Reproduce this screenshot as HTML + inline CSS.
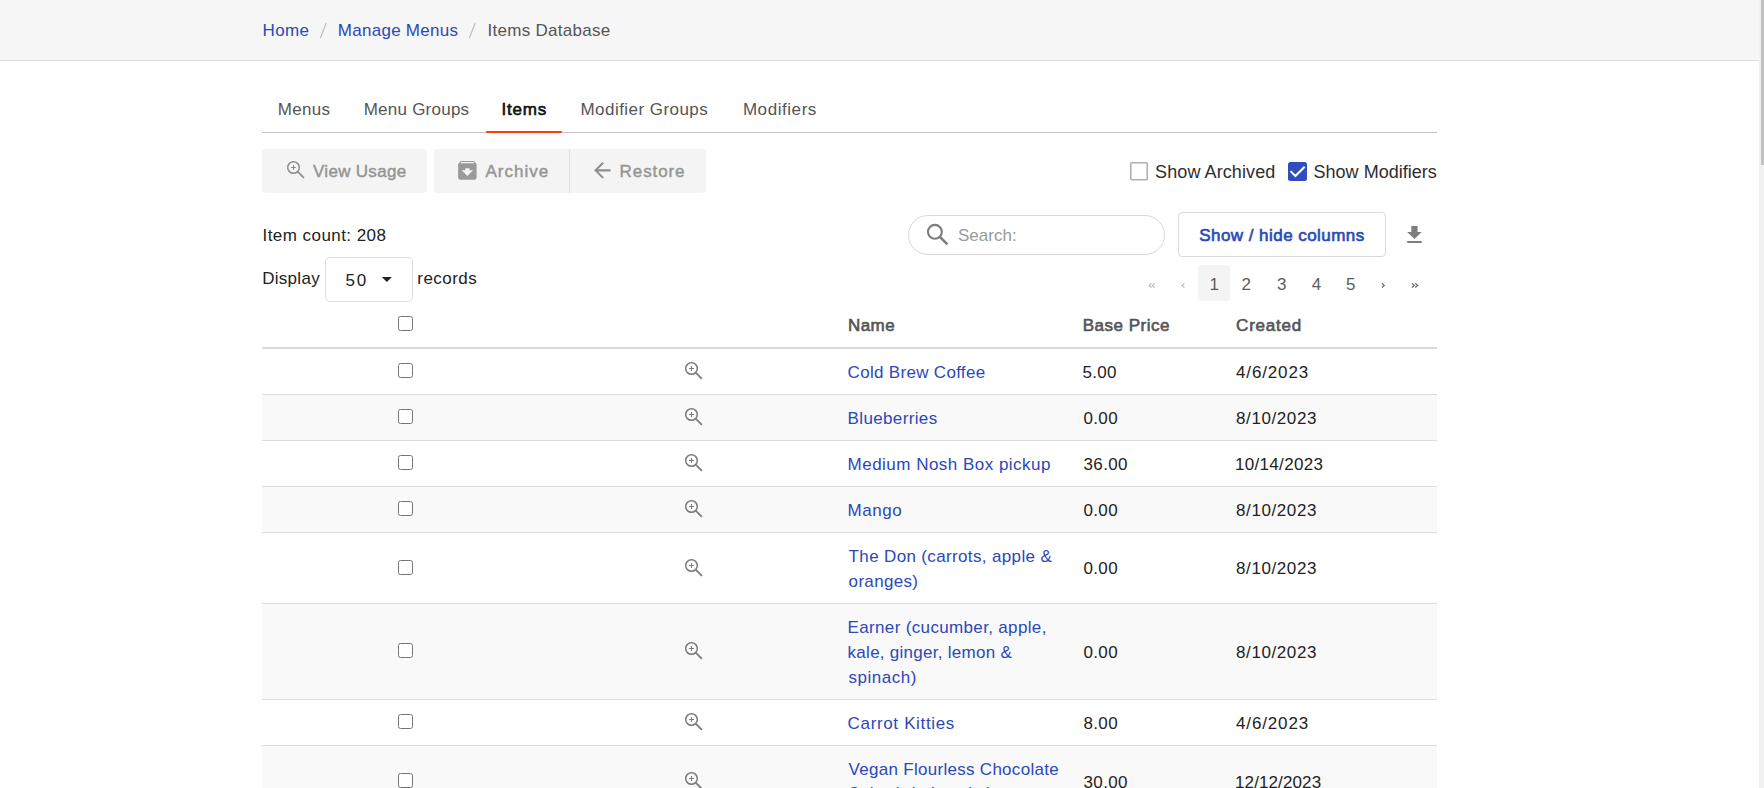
<!DOCTYPE html><html><head><meta charset="utf-8"><title>Items Database</title><style>
html,body{margin:0;padding:0;}
body{width:1764px;height:788px;overflow:hidden;position:relative;background:#fff;font-family:"Liberation Sans",sans-serif;font-size:17px;color:#222;}
.a{position:absolute;white-space:nowrap;line-height:17px;font-size:17px;}
.ab{position:absolute;}
.cb{position:absolute;width:13px;height:13px;border:1px solid #767676;border-radius:2.5px;background:#fff;}
.row{position:absolute;left:262px;width:1175px;}
.bd{position:absolute;left:262px;width:1175px;height:1px;background:#dddddd;}
.st{background:#f9f9f9;}
</style></head><body>
<div class="ab" style="left:0;top:0;width:1759px;height:60px;background:#f6f6f6"></div>
<div class="ab" style="left:0;top:60px;width:1759px;height:1px;background:#dedede"></div>
<div class="ab" style="left:1759px;top:0;width:5px;height:788px;background:#f1f1f1"></div>
<div class="ab" style="left:1761px;top:0;width:3px;height:165px;background:#c1c1c1"></div>
<div class="ab" style="left:262px;top:132px;width:1175px;height:1px;background:#c4c4c4"></div>
<div class="ab" style="left:486px;top:131px;width:76px;height:2px;background:#ff3d00;border-radius:1px"></div>
<div class="ab" style="left:262px;top:149px;width:165px;height:44px;background:#f4f4f4;border-radius:4px"></div>
<div class="ab" style="left:434px;top:149px;width:272px;height:44px;background:#f4f4f4;border-radius:4px"></div>
<div class="ab" style="left:569px;top:149px;width:1px;height:44px;background:#e0e0e0"></div>
<svg class="ab" style="left:283.50px;top:158.10px" width="24" height="24" viewBox="0 0 24 24"><circle cx="9.5" cy="9.5" r="5.8" fill="none" stroke="#8e8e8e" stroke-width="1.5"/><path d="M9.5 7v5M7 9.5h5" stroke="#8e8e8e" stroke-width="1"/><path d="M13.7 13.7L19.9 19.9" stroke="#8e8e8e" stroke-width="1.8"/></svg>
<svg class="ab" style="left:455.00px;top:157.90px" width="24.72" height="24.72" viewBox="0 0 24 24"><path d="M20.54 5.23l-1.39-1.68C18.88 3.21 18.47 3 18 3H6c-.47 0-.88.21-1.16.55L3.46 5.23C3.17 5.57 3 6.02 3 6.5V19c0 1.1.9 2 2 2h14c1.1 0 2-.9 2-2V6.5c0-.48-.17-.93-.46-1.27zM12 17.5L6.5 12H10v-2h4v2h3.5L12 17.5zM5.12 5l.81-1h12l.94 1H5.12z" fill="#9a9a9a"/></svg>
<svg class="ab" style="left:590.20px;top:158.10px" width="24.72" height="24.72" viewBox="0 0 24 24"><path d="M20 11H7.83l5.59-5.59L12 4l-8 8 8 8 1.41-1.41L7.83 13H20v-2z" fill="#8e8e8e"/></svg>
<svg class="ab" style="left:1128px;top:160px" width="22" height="23" viewBox="0 0 22 23"><rect x="2.75" y="2.75" width="16.5" height="17" rx="0.9" fill="#fff" stroke="#b0b0b0" stroke-width="1.6"/></svg>
<svg class="ab" style="left:1288px;top:162px" width="19" height="19" viewBox="0 0 19 19"><rect x="0" y="0" width="19" height="19" rx="2.5" fill="#2f4dbd"/><path d="M2.5 9.1l4.9 4.9 9.3-9.3" fill="none" stroke="#fff" stroke-width="2"/></svg>
<div class="ab" style="left:908px;top:215px;width:255px;height:38px;border:1px solid #d8d8d8;border-radius:20px"></div>
<svg class="ab" style="left:918px;top:216px" width="36" height="36" viewBox="0 0 36 36"><circle cx="16.9" cy="15.85" r="6.95" fill="none" stroke="#7c7c7c" stroke-width="2.1"/><path d="M21.6 20.55L29.4 28.35" stroke="#7c7c7c" stroke-width="2.6"/></svg>
<div class="ab" style="left:1178px;top:212px;width:206px;height:43px;border:1px solid #dadada;border-radius:4px"></div>
<svg class="ab" style="left:1402.0px;top:223.2px" width="24.86" height="24" viewBox="0 0 24 24" preserveAspectRatio="none"><path d="M19 9h-4V3H9v6H5l7 7 7-7zM5 18v2h14v-2H5z" fill="#7e7e7e"/></svg>
<div class="ab" style="left:325px;top:257px;width:86px;height:43px;border:1px solid #dedede;border-radius:5px"></div>
<svg class="ab" style="left:381px;top:276px" width="12" height="7" viewBox="0 0 12 7"><path d="M0.9 1.1h10L5.9 6.1z" fill="#222"/></svg>
<svg class="ab" style="left:318px;top:22px" width="10" height="17" viewBox="0 0 10 17"><path d="M2.4 16L8.2 1" stroke="#bdbdbd" stroke-width="1.15"/></svg>
<svg class="ab" style="left:467px;top:22px" width="10" height="17" viewBox="0 0 10 17"><path d="M2.4 16L8.2 1" stroke="#bdbdbd" stroke-width="1.15"/></svg>
<div class="ab" style="left:1198px;top:265px;width:32px;height:36px;background:#f4f4f4;border-radius:3px"></div>
<svg class="ab" style="left:1148px;top:282px" width="10" height="7" viewBox="0 0 10 7"><path d="M3.4 1.3L1.0 3.4 3.4 5.5M6.699999999999999 1.3L4.3 3.4 6.699999999999999 5.5" fill="none" stroke="#b3b3b8" stroke-width="1.05"/></svg>
<svg class="ab" style="left:1180.5px;top:282px" width="6" height="7" viewBox="0 0 6 7"><path d="M3.4 1.3L1.0 3.4 3.4 5.5" fill="none" stroke="#b3b3b8" stroke-width="1.05"/></svg>
<svg class="ab" style="left:1381px;top:282px" width="6" height="7" viewBox="0 0 6 7"><path d="M0.9 1.3L3.3 3.4 0.9 5.5" fill="none" stroke="#666" stroke-width="1.15"/></svg>
<svg class="ab" style="left:1411px;top:282px" width="10" height="7" viewBox="0 0 10 7"><path d="M0.9 1.3L3.3 3.4 0.9 5.5M4.2 1.3L6.6 3.4 4.2 5.5" fill="none" stroke="#666" stroke-width="1.15"/></svg>
<div class="cb" style="left:398px;top:316px"></div>
<div class="ab" style="left:262px;top:347px;width:1175px;height:2px;background:#dadada"></div>
<div class="bd" style="top:394px"></div>
<div class="cb" style="left:398px;top:363px"></div>
<svg class="ab" style="left:681.80px;top:359.30px" width="24" height="24" viewBox="0 0 24 24"><circle cx="9.5" cy="9.5" r="5.8" fill="none" stroke="#7c7c7c" stroke-width="1.5"/><path d="M9.5 7v5M7 9.5h5" stroke="#7c7c7c" stroke-width="1"/><path d="M13.7 13.7L19.9 19.9" stroke="#7c7c7c" stroke-width="1.8"/></svg>
<div class="row st" style="top:395px;height:45px"></div>
<div class="bd" style="top:440px"></div>
<div class="cb" style="left:398px;top:409px"></div>
<svg class="ab" style="left:681.80px;top:405.30px" width="24" height="24" viewBox="0 0 24 24"><circle cx="9.5" cy="9.5" r="5.8" fill="none" stroke="#7c7c7c" stroke-width="1.5"/><path d="M9.5 7v5M7 9.5h5" stroke="#7c7c7c" stroke-width="1"/><path d="M13.7 13.7L19.9 19.9" stroke="#7c7c7c" stroke-width="1.8"/></svg>
<div class="bd" style="top:486px"></div>
<div class="cb" style="left:398px;top:455px"></div>
<svg class="ab" style="left:681.80px;top:451.30px" width="24" height="24" viewBox="0 0 24 24"><circle cx="9.5" cy="9.5" r="5.8" fill="none" stroke="#7c7c7c" stroke-width="1.5"/><path d="M9.5 7v5M7 9.5h5" stroke="#7c7c7c" stroke-width="1"/><path d="M13.7 13.7L19.9 19.9" stroke="#7c7c7c" stroke-width="1.8"/></svg>
<div class="row st" style="top:487px;height:45px"></div>
<div class="bd" style="top:532px"></div>
<div class="cb" style="left:398px;top:501px"></div>
<svg class="ab" style="left:681.80px;top:497.30px" width="24" height="24" viewBox="0 0 24 24"><circle cx="9.5" cy="9.5" r="5.8" fill="none" stroke="#7c7c7c" stroke-width="1.5"/><path d="M9.5 7v5M7 9.5h5" stroke="#7c7c7c" stroke-width="1"/><path d="M13.7 13.7L19.9 19.9" stroke="#7c7c7c" stroke-width="1.8"/></svg>
<div class="bd" style="top:603px"></div>
<div class="cb" style="left:398px;top:560px"></div>
<svg class="ab" style="left:681.80px;top:555.80px" width="24" height="24" viewBox="0 0 24 24"><circle cx="9.5" cy="9.5" r="5.8" fill="none" stroke="#7c7c7c" stroke-width="1.5"/><path d="M9.5 7v5M7 9.5h5" stroke="#7c7c7c" stroke-width="1"/><path d="M13.7 13.7L19.9 19.9" stroke="#7c7c7c" stroke-width="1.8"/></svg>
<div class="row st" style="top:604px;height:95px"></div>
<div class="bd" style="top:699px"></div>
<div class="cb" style="left:398px;top:643px"></div>
<svg class="ab" style="left:681.80px;top:639.30px" width="24" height="24" viewBox="0 0 24 24"><circle cx="9.5" cy="9.5" r="5.8" fill="none" stroke="#7c7c7c" stroke-width="1.5"/><path d="M9.5 7v5M7 9.5h5" stroke="#7c7c7c" stroke-width="1"/><path d="M13.7 13.7L19.9 19.9" stroke="#7c7c7c" stroke-width="1.8"/></svg>
<div class="bd" style="top:745px"></div>
<div class="cb" style="left:398px;top:714px"></div>
<svg class="ab" style="left:681.80px;top:710.30px" width="24" height="24" viewBox="0 0 24 24"><circle cx="9.5" cy="9.5" r="5.8" fill="none" stroke="#7c7c7c" stroke-width="1.5"/><path d="M9.5 7v5M7 9.5h5" stroke="#7c7c7c" stroke-width="1"/><path d="M13.7 13.7L19.9 19.9" stroke="#7c7c7c" stroke-width="1.8"/></svg>
<div class="row st" style="top:746px;height:70px"></div>
<div class="bd" style="top:816px"></div>
<div class="cb" style="left:398px;top:773px"></div>
<svg class="ab" style="left:681.80px;top:768.80px" width="24" height="24" viewBox="0 0 24 24"><circle cx="9.5" cy="9.5" r="5.8" fill="none" stroke="#7c7c7c" stroke-width="1.5"/><path d="M9.5 7v5M7 9.5h5" stroke="#7c7c7c" stroke-width="1"/><path d="M13.7 13.7L19.9 19.9" stroke="#7c7c7c" stroke-width="1.8"/></svg>
<span class="a" style="left:262.60px;top:22.00px;color:#2b48b9;letter-spacing:0.333px">Home</span>
<span class="a" style="left:337.80px;top:22.00px;color:#2b48b9;letter-spacing:0.273px">Manage Menus</span>
<span class="a" style="left:487.60px;top:22.00px;color:#555555;letter-spacing:0.269px">Items Database</span>
<span class="a" style="left:277.70px;top:101.00px;color:#555555;letter-spacing:0.350px">Menus</span>
<span class="a" style="left:363.70px;top:101.00px;color:#555555;letter-spacing:0.240px">Menu Groups</span>
<span class="a" style="left:501.40px;top:101.00px;color:#111111;-webkit-text-stroke-width:0.62px;letter-spacing:0.850px">Items</span>
<span class="a" style="left:580.50px;top:101.00px;color:#555555;letter-spacing:0.450px">Modifier Groups</span>
<span class="a" style="left:742.90px;top:101.00px;color:#555555;letter-spacing:0.562px">Modifiers</span>
<span class="a" style="left:313.00px;top:163.00px;color:#959595;-webkit-text-stroke-width:0.45px;letter-spacing:0.300px">View Usage</span>
<span class="a" style="left:485.50px;top:163.00px;color:#959595;-webkit-text-stroke-width:0.45px;letter-spacing:1.000px">Archive</span>
<span class="a" style="left:619.60px;top:163.00px;color:#959595;-webkit-text-stroke-width:0.45px;letter-spacing:0.900px">Restore</span>
<span class="a" style="left:1155.10px;top:163.00px;color:#2e2e2e;font-size:18px;line-height:18px;letter-spacing:0.092px">Show Archived</span>
<span class="a" style="left:1313.50px;top:163.00px;color:#2e2e2e;font-size:18px;line-height:18px;letter-spacing:0.023px">Show Modifiers</span>
<span class="a" style="left:262.50px;top:227.00px;color:#222222;letter-spacing:0.450px">Item count: 208</span>
<span class="a" style="left:958.00px;top:227.00px;color:#9a9a9a;letter-spacing:0.033px">Search:</span>
<span class="a" style="left:1199.20px;top:227.00px;color:#2b48b9;-webkit-text-stroke-width:0.62px;letter-spacing:0.456px">Show / hide columns</span>
<span class="a" style="left:262.20px;top:270.00px;color:#222222;letter-spacing:0.283px">Display</span>
<span class="a" style="left:345.60px;top:272.00px;color:#222222;letter-spacing:1.600px">50</span>
<span class="a" style="left:417.30px;top:270.00px;color:#222222;letter-spacing:0.450px">records</span>
<span class="a" style="left:1209.60px;top:276.00px;color:#5c5c5c">1</span>
<span class="a" style="left:1241.50px;top:276.00px;color:#5c5c5c">2</span>
<span class="a" style="left:1277.00px;top:276.00px;color:#5c5c5c">3</span>
<span class="a" style="left:1311.70px;top:276.00px;color:#5c5c5c">4</span>
<span class="a" style="left:1346.10px;top:276.00px;color:#5c5c5c">5</span>
<span class="a" style="left:847.90px;top:317.00px;color:#555555;-webkit-text-stroke-width:0.62px;letter-spacing:0.467px">Name</span>
<span class="a" style="left:1082.80px;top:317.00px;color:#555555;-webkit-text-stroke-width:0.62px;letter-spacing:0.489px">Base Price</span>
<span class="a" style="left:1236.10px;top:317.00px;color:#555555;-webkit-text-stroke-width:0.62px;letter-spacing:0.783px">Created</span>
<span class="a" style="left:847.60px;top:364.00px;color:#2b48b9;letter-spacing:0.307px">Cold Brew Coffee</span>
<span class="a" style="left:1082.50px;top:364.00px;color:#222222;letter-spacing:0.300px">5.00</span>
<span class="a" style="left:1236.00px;top:364.00px;color:#222222;letter-spacing:0.857px">4/6/2023</span>
<span class="a" style="left:847.60px;top:410.00px;color:#2b48b9;letter-spacing:0.360px">Blueberries</span>
<span class="a" style="left:1083.50px;top:410.00px;color:#222222;letter-spacing:0.333px">0.00</span>
<span class="a" style="left:1236.00px;top:410.00px;color:#222222;letter-spacing:0.600px">8/10/2023</span>
<span class="a" style="left:847.60px;top:456.00px;color:#2b48b9;letter-spacing:0.481px">Medium Nosh Box pickup</span>
<span class="a" style="left:1083.50px;top:456.00px;color:#222222;letter-spacing:0.375px">36.00</span>
<span class="a" style="left:1235.00px;top:456.00px;color:#222222;letter-spacing:0.311px">10/14/2023</span>
<span class="a" style="left:847.60px;top:502.00px;color:#2b48b9;letter-spacing:0.525px">Mango</span>
<span class="a" style="left:1083.50px;top:502.00px;color:#222222;letter-spacing:0.333px">0.00</span>
<span class="a" style="left:1236.00px;top:502.00px;color:#222222;letter-spacing:0.600px">8/10/2023</span>
<span class="a" style="left:848.60px;top:548.00px;color:#2b48b9;letter-spacing:0.354px">The Don (carrots, apple &amp;</span>
<span class="a" style="left:848.60px;top:573.00px;color:#2b48b9;letter-spacing:0.329px">oranges)</span>
<span class="a" style="left:1083.50px;top:560.00px;color:#222222;letter-spacing:0.333px">0.00</span>
<span class="a" style="left:1236.00px;top:560.00px;color:#222222;letter-spacing:0.600px">8/10/2023</span>
<span class="a" style="left:847.60px;top:619.00px;color:#2b48b9;letter-spacing:0.343px">Earner (cucumber, apple,</span>
<span class="a" style="left:847.60px;top:644.00px;color:#2b48b9;letter-spacing:0.270px">kale, ginger, lemon &amp;</span>
<span class="a" style="left:848.60px;top:669.00px;color:#2b48b9;letter-spacing:0.500px">spinach)</span>
<span class="a" style="left:1083.50px;top:644.00px;color:#222222;letter-spacing:0.333px">0.00</span>
<span class="a" style="left:1236.00px;top:644.00px;color:#222222;letter-spacing:0.600px">8/10/2023</span>
<span class="a" style="left:847.60px;top:715.00px;color:#2b48b9;letter-spacing:0.654px">Carrot Kitties</span>
<span class="a" style="left:1083.50px;top:715.00px;color:#222222;letter-spacing:0.333px">8.00</span>
<span class="a" style="left:1236.00px;top:715.00px;color:#222222;letter-spacing:0.857px">4/6/2023</span>
<span class="a" style="left:848.60px;top:761.00px;color:#2b48b9;letter-spacing:0.287px">Vegan Flourless Chocolate</span>
<span class="a" style="left:847.60px;top:785.00px;color:#2b48b9;letter-spacing:0.244px">Cake (whole cake)</span>
<span class="a" style="left:1083.50px;top:774.00px;color:#222222;letter-spacing:0.375px">30.00</span>
<span class="a" style="left:1235.00px;top:774.00px;color:#222222;letter-spacing:0.111px">12/12/2023</span>
</body></html>
